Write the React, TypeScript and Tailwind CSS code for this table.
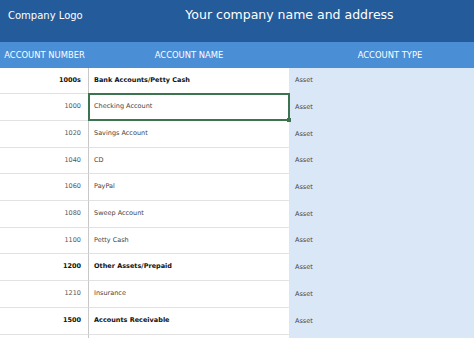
import React from "react";

const rows: { num: string; name: string; bold?: boolean; h: string }[] = [
  { num: "1000s", name: "Bank  Accounts/Petty Cash", bold: true, h: "h-[26px]" },
  { num: "1000", name: "Checking Account", h: "h-[27px]" },
  { num: "1020", name: "Savings Account", h: "h-[27px]" },
  { num: "1040", name: "CD", h: "h-[26px]" },
  { num: "1060", name: "PayPal", h: "h-[27px]" },
  { num: "1080", name: "Sweep Account", h: "h-[27px]" },
  { num: "1100", name: "Petty Cash", h: "h-[26px]" },
  { num: "1200", name: "Other Assets/Prepaid", bold: true, h: "h-[27px]" },
  { num: "1210", name: "Insurance", h: "h-[27px]" },
  { num: "1500", name: "Accounts Receivable", bold: true, h: "h-[27px]" },
];

export default function App() {
  return (
    <div
      className="w-[474px] h-[338px] overflow-hidden bg-white antialiased"
      style={{ fontFamily: '"DejaVu Sans", "Liberation Sans", sans-serif' }}
    >
      <div className="h-[42px] bg-[#245b9a] flex items-start">
        <div className="w-[89px] pt-[8px] pl-[8px] text-[10px] text-white whitespace-nowrap">
          Company Logo
        </div>
        <div className="flex-1 pt-[6px] pl-[16px] text-center text-[12.5px] text-white whitespace-nowrap">
          Your company name and address
        </div>
      </div>
      <div className="h-[26px] bg-[#4a8ed6] grid grid-cols-[89px_200px_1fr] items-center text-white text-[8.4px] whitespace-nowrap">
        <div className="text-center">ACCOUNT NUMBER</div>
        <div className="text-center">ACCOUNT NAME</div>
        <div className="text-center pl-[17px]">ACCOUNT TYPE</div>
      </div>
      {rows.map((r, i) => (
        <div key={i} className={`grid grid-cols-[89px_200px_1fr] ${r.h}`}>
          <div
            className={`flex items-center justify-end pr-[7px] border-b border-r border-b-[#e2e2e2] border-r-[#c8c8c8] text-[6.5px] ${
              r.bold ? "font-bold text-[#111]" : "text-[#555]"
            }`}
          >
            {r.num}
          </div>
          <div
            className={`relative flex items-center pl-[5px] border-b border-[#e2e2e2] text-[6.5px] whitespace-nowrap ${
              r.bold ? "font-bold text-[#111]" : "text-[#444]"
            }`}
          >
            {r.name}
            {i === 1 && (
              <div className="absolute -left-[1px] -top-[1px] -right-[1px] -bottom-[1px] border-2 border-[#3d7450]">
                <div className="absolute -right-[3px] -bottom-[3px] w-[4px] h-[4px] bg-[#3d7450]" />
              </div>
            )}
          </div>
          <div className="flex items-center pl-[6px] bg-[#dae7f7] text-[6.5px] text-[#444]">
            Asset
          </div>
        </div>
      ))}
      <div className="grid grid-cols-[89px_200px_1fr] h-[10px]">
        <div className="border-r border-r-[#c8c8c8]" />
        <div />
        <div className="bg-[#dae7f7]" />
      </div>
    </div>
  );
}
